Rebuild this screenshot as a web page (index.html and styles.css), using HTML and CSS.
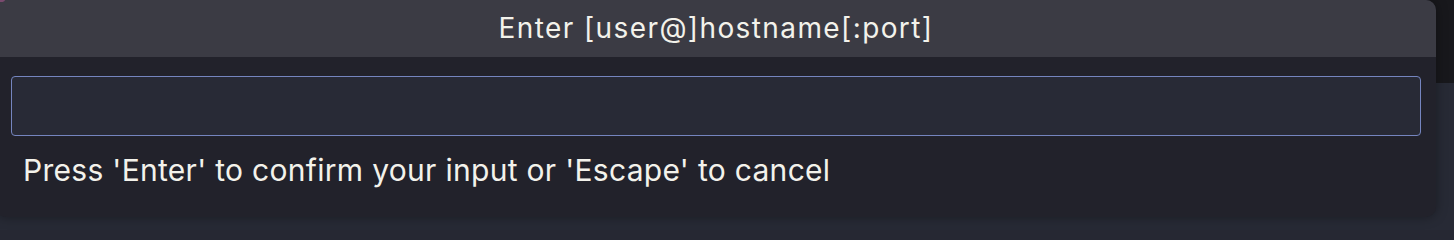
FILE: index.html
```html
<!DOCTYPE html>
<html>
<head>
<meta charset="utf-8">
<link rel="stylesheet" href="styles.css">
</head>
<body>
<div class="backdrop">
  <div class="backdrop-top"></div>
  <div class="backdrop-main"></div>
</div>
<div class="quick-input">
  <div class="qi-title">Enter [user@]hostname[:port]</div>
  <div class="qi-body">
    <div class="qi-box"></div>
    <div class="qi-message">Press 'Enter' to confirm your input or 'Escape' to cancel</div>
  </div>
</div>
<span class="corner-dot"></span>
</body>
</html>
```
FILE: styles.css
```css
html, body {
  margin: 0;
  padding: 0;
  width: 1454px;
  height: 230px;
  overflow: hidden;
  background: #262833;
}
body {
  position: relative;
  font-family: Inter, "Noto Sans", sans-serif;
}
.backdrop {
  display: flex;
  flex-direction: column;
  height: 230px;
}
.backdrop-top {
  height: 83px;
  background: #18181c;
}
.backdrop-main {
  flex: 1;
  background: #272a35;
}
.quick-input {
  position: absolute;
  left: -4px;
  top: 0;
  width: 1440px;
  height: 217px;
  border-radius: 0 10px 10px 10px;
  background: #22222b;
  box-shadow: 0 0 12px rgba(0, 0, 0, 0.35);
  overflow: hidden;
}
.qi-title {
  height: 57px;
  background: #3b3b44;
  color: #f3f2eb;
  font-size: 28px;
  letter-spacing: 1.4px;
  line-height: 56px;
  text-align: center;
}
.qi-body {
  padding: 19px 15px 0 15px;
  display: flex;
  flex-direction: column;
}
.qi-box {
  height: 58px;
  border: 1px solid #7585bf;
  border-radius: 4px;
  background: #282a36;
}
.qi-message {
  padding: 0 0 0 12px;
  margin-top: 14px;
  color: #f3f2eb;
  font-size: 30px;
  letter-spacing: 0.3px;
  line-height: 40px;
}
.corner-dot {
  position: absolute;
  left: -3px;
  top: -3px;
  width: 8px;
  height: 5px;
  border-radius: 50%;
  background: #7a4a6e;
}
```
